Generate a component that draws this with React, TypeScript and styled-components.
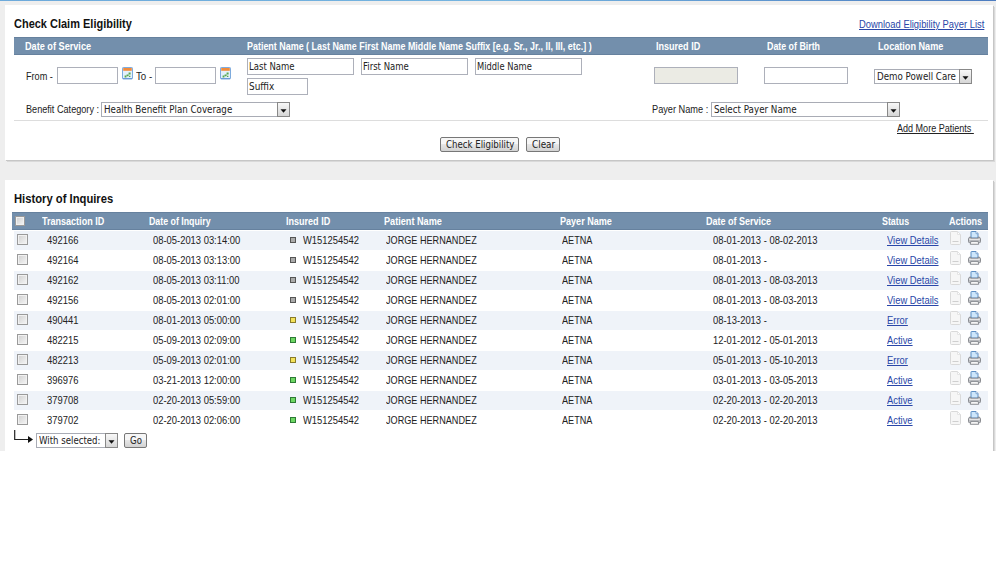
import React, { useLayoutEffect, useRef, useState } from "react";
import styled, { createGlobalStyle } from "styled-components";

const GlobalStyle = createGlobalStyle`
  *, *::before, *::after { box-sizing: border-box; }
  body { margin: 0; background: #fff; font-family: "Liberation Sans", Arial, sans-serif; color: #222; }
`;

type Kind = "body" | "head" | "title" | "ui" | "link" | "dark";

const FitBox = styled.span<{ $w: number; $kind: Kind }>`
  display: inline-block;
  flex: none;
  width: ${(p) => p.$w}px;
  height: 14px;
  line-height: 14px;
  white-space: nowrap;
  font-family: ${(p) => (p.$kind === "ui" ? '"DejaVu Sans", Verdana, sans-serif' : '"Liberation Sans", Arial, sans-serif')};
  font-size: ${(p) => ({ body: 11.5, head: 11.5, title: 13.5, ui: 10, link: 11.5, dark: 11.5 })[p.$kind]}px;
  font-weight: ${(p) => (p.$kind === "head" || p.$kind === "title" ? 700 : 400)};
  color: ${(p) => ({ body: "#222", head: "#fff", title: "#111", ui: "#222", link: "#2a47a8", dark: "#222" })[p.$kind]};
  text-decoration: ${(p) => (p.$kind === "link" || p.$kind === "dark" ? "underline" : "none")};
  text-underline-offset: 1px;
`;

const FitInner = styled.span`
  display: inline-block;
  transform-origin: 0 50%;
  text-decoration: inherit;
  white-space: pre;
`;

/* Condenses a label horizontally so that it fills exactly the given width. */
function Fit({ w, kind = "body", children }: { w: number; kind?: Kind; children: string }) {
  const ref = useRef<HTMLSpanElement>(null);
  const [scale, setScale] = useState(1);
  useLayoutEffect(() => {
    if (ref.current) setScale(w / ref.current.offsetWidth);
  }, [w, children]);
  return (
    <FitBox $w={w} $kind={kind}>
      <FitInner ref={ref} style={{ transform: `scaleX(${scale})` }}>
        {children}
      </FitInner>
    </FitBox>
  );
}

const Page = styled.div`
  width: 996px;
  height: 451px;
  overflow: hidden;
  background: #eee;
  display: flex;
  flex-direction: column;
`;

const TopBar = styled.div`
  height: 1px;
  flex: none;
  background: linear-gradient(90deg, #6daadb, #74b4e0 50%, #4c7cc0);
  margin-bottom: 4px;
`;

const Panel = styled.section<{ $h: number; $gap?: number }>`
  flex: none;
  width: 988px;
  height: ${(p) => p.$h}px;
  margin: 0 0 ${(p) => p.$gap ?? 0}px 5px;
  background: #fff;
  box-shadow: 1px 1px 0 #c6c6c6, 2px 2px 0 #d9d9d9;
`;

const TitleRow = styled.div`
  display: flex;
  justify-content: space-between;
  height: 32px;
  padding: 12px 9px 0 9px;
`;

const bar = `
  height: 18px;
  align-items: center;
  background: #738fac;
  border-top: 1px solid #66819e;
  border-bottom: 1px solid #66819e;
`;

const FormHead = styled.div`
  ${bar}
  display: grid;
  grid-template-columns: 222px 409px 111px 111px auto;
  margin: 0 5px 0 9px;
  padding-left: 11px;
`;

const FieldRow = styled.div`
  display: grid;
  grid-template-columns: 221px 407px 110px 110px auto;
  height: 44px;
  padding: 3px 0 0 21px;
`;

const Dates = styled.div`
  display: flex;
  padding-top: 9px;
`;

const Names = styled.div`
  display: flex;
  flex-wrap: wrap;
  align-content: flex-start;
  width: 360px;
  gap: 3px 7px;
`;

const Cell = styled.div<{ $top?: number }>`
  padding-top: ${(p) => p.$top ?? 9}px;
`;

const Field = styled.div<{ $w: number; $disabled?: boolean }>`
  display: flex;
  align-items: center;
  width: ${(p) => p.$w}px;
  height: 17px;
  padding: 1px 0 0 0.5px;
  border: 1px solid #adb0ba;
  background: ${(p) => (p.$disabled ? "#ebebe4" : "#fff")};
`;

const Label = styled.div<{ $w: number }>`
  display: flex;
  flex: none;
  width: ${(p) => p.$w}px;
  padding-top: 2px;
`;

const IconSlot = styled.div<{ $w: number }>`
  width: ${(p) => p.$w}px;
  padding-left: 4px;
`;

const SelectBox = styled.div<{ $w: number }>`
  display: flex;
  align-items: center;
  flex: none;
  justify-content: space-between;
  width: ${(p) => p.$w}px;
  height: 15px;
  border: 1px solid #a9acb5;
  padding-left: 2px;
  background: #fff;
`;

const SelectText = styled.span`
  display: flex;
  padding-top: 1px;
`;

const SelectArrow = styled.span`
  display: flex;
  align-items: flex-end;
  justify-content: center;
  width: 13px;
  height: 15px;
  margin-right: -1px;
  padding-bottom: 3px;
  border: 1px solid #888;
  background: linear-gradient(#f8f8f8, #d6d6d6);
`;

const Arrow = () => (
  <SelectArrow>
    <svg width="7" height="4" viewBox="0 0 7 4">
      <path d="M0.5 0.3h6L3.5 3.7z" fill="#111" />
    </svg>
  </SelectArrow>
);

const Select = ({ w, textWidth, children }: { w: number; textWidth: number; children: string }) => (
  <SelectBox $w={w}>
    <SelectText><Fit w={textWidth} kind="ui">{children}</Fit></SelectText>
    <Arrow />
  </SelectBox>
);

const CategoryRow = styled.div`
  display: grid;
  grid-template-columns: 75px 551px 59px auto;
  height: 21px;
  align-items: start;
  padding: 3px 0 0 21px;
`;

const Divider = styled.div`
  height: 1px;
  margin: 0 5px 0 9px;
  background: #ddd;
`;

const MoreRow = styled.div`
  display: flex;
  justify-content: flex-end;
  height: 16px;
  padding-right: 19px;
`;

const Buttons = styled.div`
  display: flex;
  gap: 7px;
  padding-left: 435px;
`;

const Button = styled.button<{ $w: number }>`
  display: flex;
  align-items: center;
  justify-content: center;
  width: ${(p) => p.$w}px;
  height: 15px;
  padding: 1px 0 0;
  border: 1px solid #777;
  border-radius: 2px;
  background: linear-gradient(#f6f6f6 0 45%, #e6e6e6 50%, #d2d2d2);
`;

const TableHead = styled.div`
  ${bar}
  display: grid;
  grid-template-columns: 27px 107px 137px 98px 176px 146px 176px 67px auto;
  margin: 0 5px 0 7px;
  padding-left: 3px;
`;

const Rows = styled.div`
  padding-top: 1px;
`;

const Row = styled.div<{ $shade: boolean }>`
  display: grid;
  grid-template-columns: 30px 106px 138px 12px 83px 176px 151px 174px 64px 18px auto;
  align-items: center;
  height: 19px;
  margin: 0 5px 1px 9px;
  padding: 0 0 2px 3px;
  background: ${(p) => (p.$shade ? "#eff3f9" : "#fff")};
`;

const Value = styled.span<{ $link?: boolean; $name?: boolean }>`
  display: block;
  width: max-content;
  margin-left: -0.5px;
  white-space: nowrap;
  font-size: 11.5px;
  line-height: 14px;
  transform: scaleX(${(p) => (p.$name ? 0.793 : 0.817)});
  transform-origin: 0 50%;
  color: ${(p) => (p.$link ? "#2a47a8" : "#222")};
  text-decoration: ${(p) => (p.$link ? "underline" : "none")};
  text-underline-offset: 1px;
`;

const Check = styled.span<{ $small?: boolean }>`
  display: block;
  width: ${(p) => (p.$small ? 10 : 11)}px;
  height: ${(p) => (p.$small ? 10 : 11)}px;
  border: 1px solid #9a9a9a;
  background: linear-gradient(135deg, #cfcfcf, #f6f6f6);
  box-shadow: inset 0 0 0 1px #f1f1f1;
`;

const marks = {
  gray: ["#aaa", "#555"],
  yellow: ["#f3e25a", "#8a7c2a"],
  green: ["#6ed763", "#2c7a35"],
};

const Mark = styled.span<{ $tone: keyof typeof marks }>`
  display: block;
  width: 6px;
  height: 6px;
  margin: 1px 0 0 -1px;
  border: 1px solid ${(p) => marks[p.$tone][1]};
  background: ${(p) => marks[p.$tone][0]};
`;

const Icon = styled.svg<{ $up?: number }>`
  display: block;
  margin-top: -${(p) => p.$up ?? 0}px;
  margin-left: ${(p) => (p.$up ? -1 : 0)}px;
`;

const Calendar = () => (
  <Icon width="11" height="13" viewBox="0 0 11 13">
    <rect x="0.5" y="0.5" width="10" height="11.5" rx="0.7" fill="#e3f0fc" stroke="#7eabdd" />
    <path d="M1.2 1h8.6v2.8H1.2z" fill="#f28c3c" />
    <path d="M6.6 5.6h2v2h-2zM4.6 7.4h2v1.8h-2zM2.6 8.6h1.8v1.8H2.6zM7 8.8h1.4v1.2H7z" fill="#56a84e" />
    <path d="M1 11.5h9" stroke="#6b9ad8" />
  </Icon>
);

const DocIcon = () => (
  <Icon $up={4} width="11" height="14" viewBox="0 0 11 14">
    <path d="M1.5.5H7.5L10.5 3.5v9q0 1-1 1h-8q-1 0-1-1v-11q0-1 1-1z" fill="#f6f6f6" stroke="#d9d9d9" />
    <path d="M7.5 .8V3.5h2.7" fill="#fff" stroke="#e4e4e4" />
    <path d="M2.5 10.5h6" stroke="#cfcfcf" />
  </Icon>
);

const PrinterIcon = () => (
  <Icon $up={4} width="13" height="14" viewBox="0 0 13 14">
    <path d="M3 7V1q0-.5.5-.5H8L10 2.6V7z" fill="#cde6fb" stroke="#5d8ec3" />
    <path d="M8 .6v2.1h2" fill="#fff" stroke="#5d8ec3" strokeWidth=".7" />
    <path d="M1.6 6h1.2v1.3h7.4V6h1.2l1.1 1.7v3q0 .9-.9.9H1.4q-.9 0-.9-.9v-3z" fill="#bdbfc3" stroke="#808288" strokeWidth=".9" />
    <path d="M1.2 8.3h10.6" stroke="#efefef" />
    <path d="M2.8 10.4h7.4l.5 2.9H2.3z" fill="#f5f5f5" stroke="#808389" strokeWidth=".9" />
  </Icon>
);

const Footer = styled.div`
  display: flex;
  align-items: flex-start;
  padding-left: 9px;
  margin-top: -1px;
`;

const FooterItem = styled.div<{ $ml: number }>`
  margin: 3px 0 0 ${(p) => p.$ml}px;
`;

type Tone = keyof typeof marks;
const records: [string, string, Tone, string, string][] = [
  ["492166", "08-05-2013 03:14:00", "gray", "08-01-2013 - 08-02-2013", "View Details"],
  ["492164", "08-05-2013 03:13:00", "gray", "08-01-2013 -", "View Details"],
  ["492162", "08-05-2013 03:11:00", "gray", "08-01-2013 - 08-03-2013", "View Details"],
  ["492156", "08-05-2013 02:01:00", "gray", "08-01-2013 - 08-03-2013", "View Details"],
  ["490441", "08-01-2013 05:00:00", "yellow", "08-13-2013 -", "Error"],
  ["482215", "05-09-2013 02:09:00", "green", "12-01-2012 - 05-01-2013", "Active"],
  ["482213", "05-09-2013 02:01:00", "yellow", "05-01-2013 - 05-10-2013", "Error"],
  ["396976", "03-21-2013 12:00:00", "green", "03-01-2013 - 03-05-2013", "Active"],
  ["379708", "02-20-2013 05:59:00", "green", "02-20-2013 - 02-20-2013", "Active"],
  ["379702", "02-20-2013 02:06:00", "green", "02-20-2013 - 02-20-2013", "Active"],
];

export default function App() {
  return (
    <>
      <GlobalStyle />
      <Page>
        <TopBar />
        <Panel $h={155} $gap={20}>
          <TitleRow>
            <Fit w={118} kind="title">Check Claim Eligibility</Fit>
            <Fit w={125} kind="link">Download Eligibility Payer List</Fit>
          </TitleRow>
          <FormHead>
            <Fit w={66} kind="head">Date of Service</Fit>
            <Fit w={345} kind="head">Patient Name ( Last Name First Name Middle Name Suffix [e.g. Sr., Jr., II, III, etc.] )</Fit>
            <Fit w={44} kind="head">Insured ID</Fit>
            <Fit w={53} kind="head">Date of Birth</Fit>
            <Fit w={65} kind="head">Location Name</Fit>
          </FormHead>
          <FieldRow>
            <Dates>
              <Label $w={31}><Fit w={27}>From -</Fit></Label>
              <Field $w={61} />
              <IconSlot $w={18}><Calendar /></IconSlot>
              <Label $w={19}><Fit w={16}>To -</Fit></Label>
              <Field $w={61} />
              <IconSlot $w={18}><Calendar /></IconSlot>
            </Dates>
            <Names>
              <Field $w={107}><Fit w={46} kind="ui">Last Name</Fit></Field>
              <Field $w={107}><Fit w={46} kind="ui">First Name</Fit></Field>
              <Field $w={107}><Fit w={55} kind="ui">Middle Name</Fit></Field>
              <Field $w={61}><Fit w={25} kind="ui">Suffix</Fit></Field>
            </Names>
            <Cell><Field $w={84} $disabled /></Cell>
            <Cell><Field $w={84} /></Cell>
            <Cell $top={11}><Select w={98} textWidth={79}>Demo Powell Care</Select></Cell>
          </FieldRow>
          <CategoryRow>
            <Fit w={73}>Benefit Category :</Fit>
            <Select w={189} textWidth={128}>Health Benefit Plan Coverage</Select>
            <Fit w={56}>Payer Name :</Fit>
            <Select w={189} textWidth={83}>Select Payer Name</Select>
          </CategoryRow>
          <Divider />
          <MoreRow><Fit w={77} kind="dark">{"Add More Patients "}</Fit></MoreRow>
          <Buttons>
            <Button $w={79}><Fit w={68} kind="ui">Check Eligibility</Fit></Button>
            <Button $w={34}><Fit w={23} kind="ui">Clear</Fit></Button>
          </Buttons>
        </Panel>
        <Panel $h={275}>
          <TitleRow>
            <Fit w={99} kind="title">History of Inquires</Fit>
          </TitleRow>
          <TableHead>
            <Check $small />
            <Fit w={62} kind="head">Transaction ID</Fit>
            <Fit w={62} kind="head">Date of Inquiry</Fit>
            <Fit w={44} kind="head">Insured ID</Fit>
            <Fit w={58} kind="head">Patient Name</Fit>
            <Fit w={52} kind="head">Payer Name</Fit>
            <Fit w={65} kind="head">Date of Service</Fit>
            <Fit w={27} kind="head">Status</Fit>
            <Fit w={33} kind="head">Actions</Fit>
          </TableHead>
          <Rows>
            {records.map(([id, date, tone, service, status], i) => (
              <Row key={id} $shade={i % 2 === 0}>
                <Check />
                <Value>{id}</Value>
                <Value>{date}</Value>
                <Mark $tone={tone} />
                <Value>W151254542</Value>
                <Value $name>JORGE HERNANDEZ</Value>
                <Value $name>AETNA</Value>
                <Value>{service}</Value>
                <Value $link>{status}</Value>
                <DocIcon />
                <PrinterIcon />
              </Row>
            ))}
          </Rows>
          <Footer>
            <svg width="19" height="14" viewBox="0 0 19 14">
              <path d="M0.7 0v9.5h14" fill="none" stroke="#222" strokeWidth="1.2" />
              <path d="M14 6l5 3.5-5 3.5z" fill="#111" />
            </svg>
            <FooterItem $ml={3}><Select w={82} textWidth={61}>With selected:</Select></FooterItem>
            <FooterItem $ml={6}><Button $w={23}><Fit w={12} kind="ui">Go</Fit></Button></FooterItem>
          </Footer>
        </Panel>
      </Page>
    </>
  );
}
